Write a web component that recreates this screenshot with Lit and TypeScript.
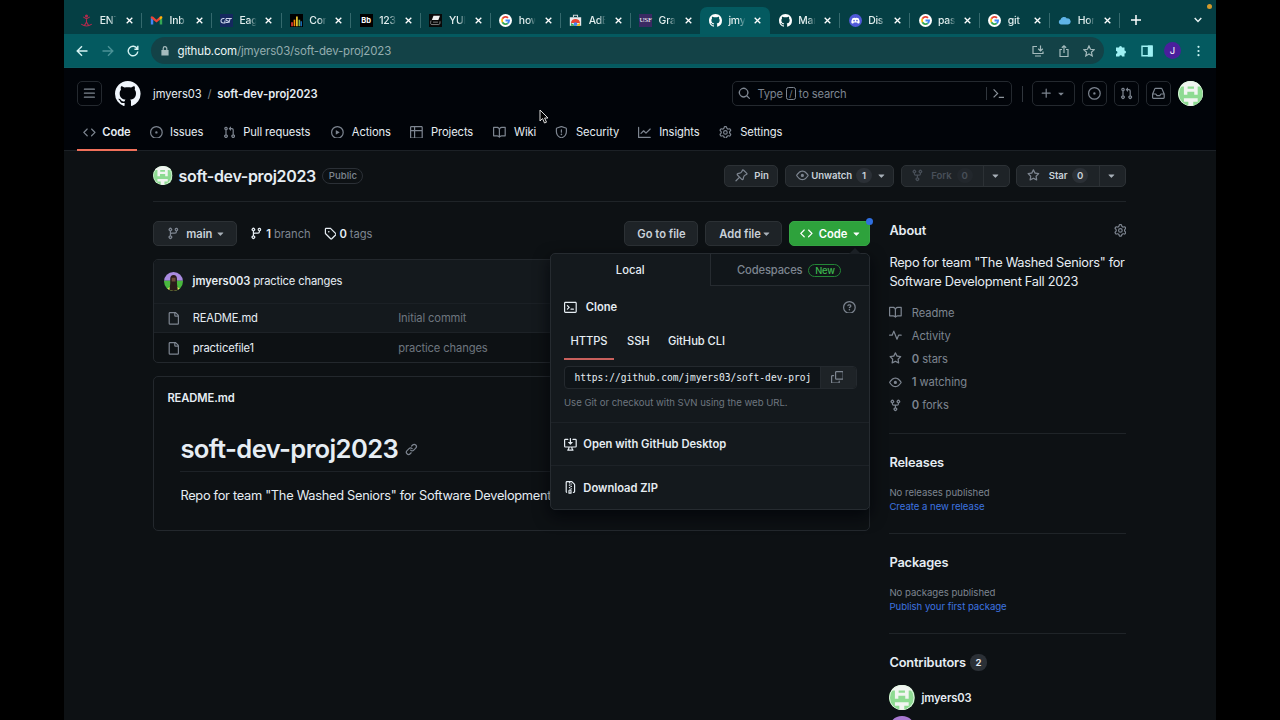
import { LitElement, html, css, svg } from "lit";
import { customElement } from "lit/decorators.js";

const P: Record<string, string> = {
  code: "m11.28 3.22 4.25 4.25a.75.75 0 0 1 0 1.06l-4.25 4.25a.749.749 0 0 1-1.275-.326.749.749 0 0 1 .215-.734L13.94 8l-3.72-3.72a.749.749 0 0 1 .326-1.275.749.749 0 0 1 .734.215Zm-6.56 0a.751.751 0 0 1 1.042.018.751.751 0 0 1 .018 1.042L2.06 8l3.72 3.72a.749.749 0 0 1-.326 1.275.749.749 0 0 1-.734-.215L.47 8.53a.75.75 0 0 1 0-1.06Z",
  issue: "M8 9.5a1.5 1.5 0 1 0 0-3 1.5 1.5 0 0 0 0 3Z M8 0a8 8 0 1 1 0 16A8 8 0 0 1 8 0ZM1.5 8a6.5 6.5 0 1 0 13 0 6.5 6.5 0 0 0-13 0Z",
  pr: "M1.5 3.25a2.25 2.25 0 1 1 3 2.122v5.256a2.251 2.251 0 1 1-1.5 0V5.372A2.25 2.25 0 0 1 1.5 3.25Zm5.677-.177L9.573.677A.25.25 0 0 1 10 .854V2.5h1A2.5 2.5 0 0 1 13.5 5v5.628a2.251 2.251 0 1 1-1.5 0V5a1 1 0 0 0-1-1h-1v1.646a.25.25 0 0 1-.427.177L7.177 3.427a.25.25 0 0 1 0-.354ZM3.75 2.5a.75.75 0 1 0 0 1.5.75.75 0 0 0 0-1.5Zm0 9.5a.75.75 0 1 0 0 1.5.75.75 0 0 0 0-1.5Zm8.25.75a.75.75 0 1 0 1.5 0 .75.75 0 0 0-1.5 0Z",
  play: "M8 0a8 8 0 1 1 0 16A8 8 0 0 1 8 0ZM1.5 8a6.5 6.5 0 1 0 13 0 6.5 6.5 0 0 0-13 0Zm4.879-2.773 4.264 2.559a.25.25 0 0 1 0 .428l-4.264 2.559A.25.25 0 0 1 6 10.559V5.442a.25.25 0 0 1 .379-.215Z",
  table: "M0 1.75C0 .784.784 0 1.75 0h12.5C15.216 0 16 .784 16 1.75v12.5A1.75 1.75 0 0 1 14.25 16H1.75A1.75 1.75 0 0 1 0 14.25ZM6.5 6.5v8h7.75a.25.25 0 0 0 .25-.25V6.5Zm8-1.5V1.75a.25.25 0 0 0-.25-.25H6.5V5Zm-13 1.5v7.75c0 .138.112.25.25.25H5v-8ZM5 5V1.5H1.75a.25.25 0 0 0-.25.25V5Z",
  book: "M0 1.75A.75.75 0 0 1 .75 1h4.253c1.227 0 2.317.59 3 1.501A3.743 3.743 0 0 1 11.006 1h4.245a.75.75 0 0 1 .75.75v10.5a.75.75 0 0 1-.75.75h-4.507a2.25 2.25 0 0 0-1.591.659l-.622.621a.75.75 0 0 1-1.06 0l-.622-.621A2.25 2.25 0 0 0 5.258 13H.75a.75.75 0 0 1-.75-.75Zm7.251 10.324.004-5.073-.002-2.253A2.25 2.25 0 0 0 5.003 2.5H1.5v9h3.757a3.75 3.75 0 0 1 1.994.574ZM8.755 4.75l-.004 7.322a3.752 3.752 0 0 1 1.992-.572H14.5v-9h-3.495a2.25 2.25 0 0 0-2.25 2.25Z",
  shield: "M7.467.133a1.748 1.748 0 0 1 1.066 0l5.25 1.68A1.75 1.75 0 0 1 15 3.48V7c0 1.566-.32 3.182-1.303 4.682-.983 1.498-2.585 2.813-5.032 3.855a1.697 1.697 0 0 1-1.33 0c-2.447-1.042-4.049-2.357-5.032-3.855C1.32 10.182 1 8.566 1 7V3.48a1.755 1.755 0 0 1 1.217-1.667Zm.61 1.429a.25.25 0 0 0-.153 0l-5.25 1.68a.25.25 0 0 0-.174.238V7c0 1.358.275 2.666 1.057 3.86.784 1.194 2.121 2.34 4.366 3.297a.196.196 0 0 0 .154 0c2.245-.956 3.582-2.104 4.366-3.298C13.225 9.666 13.5 8.36 13.5 7V3.48a.251.251 0 0 0-.174-.237l-5.25-1.68ZM8.75 4.75v3a.75.75 0 0 1-1.5 0v-3a.75.75 0 0 1 1.5 0ZM9 10.5a1 1 0 1 1-2 0 1 1 0 0 1 2 0Z",
  graph: "M1.5 1.75V13.5h13.75a.75.75 0 0 1 0 1.5H.75a.75.75 0 0 1-.75-.75V1.75a.75.75 0 0 1 1.5 0Zm14.28 2.53-5.25 5.25a.75.75 0 0 1-1.06 0L7 7.06 4.28 9.78a.751.751 0 0 1-1.042-.018.751.751 0 0 1-.018-1.042l3.25-3.25a.75.75 0 0 1 1.06 0L10 7.94l4.72-4.72a.751.751 0 0 1 1.042.018.751.751 0 0 1 .018 1.042Z",
  gear: "M8 0a8.2 8.2 0 0 1 .701.031C9.444.095 9.99.645 10.16 1.29l.288 1.107c.018.066.079.158.212.224.231.114.454.243.668.386.123.082.233.09.299.071l1.103-.303c.644-.176 1.392.021 1.82.63.27.385.506.792.704 1.218.315.675.111 1.422-.364 1.891l-.814.806c-.049.048-.098.147-.088.294.016.257.016.515 0 .772-.01.147.038.246.088.294l.814.806c.475.469.679 1.216.364 1.891a7.977 7.977 0 0 1-.704 1.217c-.428.61-1.176.807-1.82.63l-1.102-.302c-.067-.019-.177-.011-.3.071a5.909 5.909 0 0 1-.668.386c-.133.066-.194.158-.211.224l-.29 1.106c-.168.646-.715 1.196-1.458 1.26a8.006 8.006 0 0 1-1.402 0c-.743-.064-1.289-.614-1.458-1.26l-.289-1.106c-.018-.066-.079-.158-.212-.224a5.738 5.738 0 0 1-.668-.386c-.123-.082-.233-.09-.299-.071l-1.103.303c-.644.176-1.392-.021-1.82-.63a8.12 8.12 0 0 1-.704-1.218c-.315-.675-.111-1.422.363-1.891l.815-.806c.05-.048.098-.147.088-.294a6.214 6.214 0 0 1 0-.772c.01-.147-.038-.246-.088-.294l-.815-.806C.635 6.045.431 5.298.746 4.623a7.92 7.92 0 0 1 .704-1.217c.428-.61 1.176-.807 1.82-.63l1.102.302c.067.019.177.011.3-.071.214-.143.437-.272.668-.386.133-.066.194-.158.211-.224l.29-1.106C6.009.645 6.556.095 7.299.03 7.53.01 7.764 0 8 0Zm-.571 1.525c-.036.003-.108.036-.137.146l-.289 1.105c-.147.561-.549.967-.998 1.189-.173.086-.34.183-.5.29-.417.278-.97.423-1.529.27l-1.103-.303c-.109-.03-.175.016-.195.045-.22.312-.412.644-.573.99-.014.031-.021.11.059.19l.815.806c.411.406.562.957.53 1.456a4.709 4.709 0 0 0 0 .582c.032.499-.119 1.05-.53 1.456l-.815.806c-.081.08-.073.159-.059.19.162.346.353.677.573.989.02.03.085.076.195.046l1.102-.303c.56-.153 1.113-.008 1.53.27.161.107.328.204.501.29.447.222.85.629.997 1.189l.289 1.105c.029.109.101.143.137.146a6.6 6.6 0 0 0 1.142 0c.036-.003.108-.036.137-.146l.289-1.105c.147-.561.549-.967.998-1.189.173-.086.34-.183.5-.29.417-.278.97-.423 1.529-.27l1.103.303c.109.029.175-.016.195-.045.22-.313.411-.644.573-.99.014-.031.021-.11-.059-.19l-.815-.806c-.411-.406-.562-.957-.53-1.456a4.709 4.709 0 0 0 0-.582c-.032-.499.119-1.05.53-1.456l.815-.806c.081-.08.073-.159.059-.19a6.464 6.464 0 0 0-.573-.989c-.02-.03-.085-.076-.195-.046l-1.102.303c-.56.153-1.113.008-1.53-.27a4.44 4.44 0 0 0-.501-.29c-.447-.222-.85-.629-.997-1.189l-.289-1.105c-.029-.11-.101-.143-.137-.146a6.6 6.6 0 0 0-1.142 0ZM11 8a3 3 0 1 1-6 0 3 3 0 0 1 6 0ZM9.5 8a1.5 1.5 0 1 0-3.001.001A1.5 1.5 0 0 0 9.5 8Z",
  mark: "M8 0c4.42 0 8 3.58 8 8a8.013 8.013 0 0 1-5.45 7.59c-.4.08-.55-.17-.55-.38 0-.27.01-1.13.01-2.2 0-.75-.25-1.23-.54-1.48 1.78-.2 3.65-.88 3.65-3.95 0-.88-.31-1.59-.82-2.15.08-.2.36-1.02-.08-2.12 0 0-.67-.22-2.2.82-.64-.18-1.32-.27-2-.27-.68 0-1.36.09-2 .27-1.53-1.03-2.2-.82-2.2-.82-.44 1.1-.16 1.92-.08 2.12-.51.56-.82 1.28-.82 2.15 0 3.06 1.86 3.75 3.64 3.95-.23.2-.44.55-.51 1.07-.46.21-1.61.55-2.33-.66-.15-.24-.6-.83-1.23-.82-.67.01-.27.38.01.53.34.19.73.9.82 1.13.16.45.68 1.31 2.69.94 0 .67.01 1.3.01 1.49 0 .21-.15.45-.55.38A7.995 7.995 0 0 1 0 8c0-4.42 3.58-8 8-8Z",
  search: "M10.68 11.74a6 6 0 0 1-7.922-8.982 6 6 0 0 1 8.982 7.922l3.04 3.04a.749.749 0 0 1-.326 1.275.749.749 0 0 1-.734-.215ZM11.5 7a4.499 4.499 0 1 0-8.997 0A4.499 4.499 0 0 0 11.5 7Z",
  bars: "M1 2.75A.75.75 0 0 1 1.75 2h12.5a.75.75 0 0 1 0 1.5H1.75A.75.75 0 0 1 1 2.75Zm0 5A.75.75 0 0 1 1.75 7h12.5a.75.75 0 0 1 0 1.5H1.75A.75.75 0 0 1 1 7.75ZM1.75 12h12.5a.75.75 0 0 1 0 1.5H1.75a.75.75 0 0 1 0-1.5Z",
  plus: "M7.75 2a.75.75 0 0 1 .75.75V7h4.25a.75.75 0 0 1 0 1.5H8.5v4.25a.75.75 0 0 1-1.5 0V8.5H2.75a.75.75 0 0 1 0-1.5H7V2.75A.75.75 0 0 1 7.75 2Z",
  down: "m4.427 7.427 3.396 3.396a.25.25 0 0 0 .354 0l3.396-3.396A.25.25 0 0 0 11.396 7H4.604a.25.25 0 0 0-.177.427Z",
  inbox: "M2.8 2.06A1.75 1.75 0 0 1 4.41 1h7.18c.7 0 1.333.417 1.61 1.06l2.74 6.395c.04.093.06.194.06.295v4.5A1.75 1.75 0 0 1 14.25 15H1.75A1.75 1.75 0 0 1 0 13.25v-4.5c0-.101.02-.202.06-.295Zm1.61.44a.25.25 0 0 0-.23.152L1.887 8H4.75a.75.75 0 0 1 .6.3L6.625 10h2.75l1.275-1.7a.75.75 0 0 1 .6-.3h2.863L11.82 2.652a.25.25 0 0 0-.23-.152Zm10.09 7h-2.875l-1.275 1.7a.75.75 0 0 1-.6.3h-3.5a.75.75 0 0 1-.6-.3L4.375 9.5H1.5v3.75c0 .138.112.25.25.25h12.5a.25.25 0 0 0 .25-.25Z",
  pin: "m11.294.984 3.722 3.722a1.75 1.75 0 0 1-.504 2.826l-1.327.613a3.089 3.089 0 0 0-1.707 2.084l-.584 2.454c-.317 1.332-1.972 1.8-2.94.832L5.75 11.311 1.78 15.28a.749.749 0 1 1-1.06-1.06l3.969-3.97-2.204-2.204c-.968-.968-.5-2.623.832-2.94l2.454-.584a3.08 3.08 0 0 0 2.084-1.707l.613-1.327a1.75 1.75 0 0 1 2.826-.504ZM6.283 9.723l2.732 2.731a.25.25 0 0 0 .42-.119l.584-2.454a4.586 4.586 0 0 1 2.537-3.098l1.328-.613a.25.25 0 0 0 .072-.404l-3.722-3.722a.25.25 0 0 0-.404.072l-.613 1.328a4.584 4.584 0 0 1-3.098 2.537l-2.454.584a.25.25 0 0 0-.119.42l2.731 2.732Z",
  eye: "M8 2c1.981 0 3.671.992 4.933 2.078 1.27 1.091 2.187 2.345 2.637 3.023a1.62 1.62 0 0 1 0 1.798c-.45.678-1.367 1.932-2.637 3.023C11.67 13.008 9.981 14 8 14c-1.981 0-3.671-.992-4.933-2.078C1.797 10.83.88 9.576.43 8.898a1.62 1.62 0 0 1 0-1.798c.45-.677 1.367-1.931 2.637-3.022C4.33 2.992 6.019 2 8 2ZM1.679 7.932a.12.12 0 0 0 0 .136c.411.622 1.241 1.75 2.366 2.717C5.176 11.758 6.527 12.5 8 12.5c1.473 0 2.825-.742 3.955-1.715 1.124-.967 1.954-2.096 2.366-2.717a.12.12 0 0 0 0-.136c-.412-.621-1.242-1.75-2.366-2.717C10.824 4.242 9.473 3.5 8 3.5c-1.473 0-2.825.742-3.955 1.715-1.124.967-1.954 2.096-2.366 2.717ZM8 10a2 2 0 1 1-.001-3.999A2 2 0 0 1 8 10Z",
  fork: "M5 5.372v.878c0 .414.336.75.75.75h4.5a.75.75 0 0 0 .75-.75v-.878a2.25 2.25 0 1 1 1.5 0v.878a2.25 2.25 0 0 1-2.25 2.25h-1.5v2.128a2.251 2.251 0 1 1-1.5 0V8.5h-1.5A2.25 2.25 0 0 1 3.5 6.25v-.878a2.25 2.25 0 1 1 1.5 0ZM5 3.25a.75.75 0 1 0-1.5 0 .75.75 0 0 0 1.5 0Zm6.75.75a.75.75 0 1 0 0-1.5.75.75 0 0 0 0 1.5Zm-3 8.75a.75.75 0 1 0-1.5 0 .75.75 0 0 0 1.5 0Z",
  star: "M8 .25a.75.75 0 0 1 .673.418l1.882 3.815 4.21.612a.75.75 0 0 1 .416 1.279l-3.046 2.97.719 4.192a.751.751 0 0 1-1.088.791L8 12.347l-3.766 1.98a.75.75 0 0 1-1.088-.79l.72-4.194L.818 6.374a.75.75 0 0 1 .416-1.28l4.21-.611L7.327.668A.75.75 0 0 1 8 .25Zm0 2.445L6.615 5.5a.75.75 0 0 1-.564.41l-3.097.45 2.24 2.184a.75.75 0 0 1 .216.664l-.528 3.084 2.769-1.456a.75.75 0 0 1 .698 0l2.77 1.456-.53-3.084a.75.75 0 0 1 .216-.664l2.24-2.183-3.096-.45a.75.75 0 0 1-.564-.41L8 2.694Z",
  branch: "M9.5 3.25a2.25 2.25 0 1 1 3 2.122V6A2.5 2.5 0 0 1 10 8.5H6a1 1 0 0 0-1 1v1.128a2.251 2.251 0 1 1-1.5 0V5.372a2.25 2.25 0 1 1 1.5 0v1.836A2.493 2.493 0 0 1 6 7h4a1 1 0 0 0 1-1v-.628A2.25 2.25 0 0 1 9.5 3.25Zm-6 0a.75.75 0 1 0 1.5 0 .75.75 0 0 0-1.5 0Zm8.25-.75a.75.75 0 1 0 0 1.5.75.75 0 0 0 0-1.5ZM4.25 12a.75.75 0 1 0 0 1.5.75.75 0 0 0 0-1.5Z",
  tag: "M1 7.775V2.75C1 1.784 1.784 1 2.75 1h5.025c.464 0 .91.184 1.238.513l6.25 6.25a1.75 1.75 0 0 1 0 2.474l-5.026 5.026a1.75 1.75 0 0 1-2.474 0l-6.25-6.25A1.752 1.752 0 0 1 1 7.775Zm1.5 0c0 .066.026.13.073.177l6.25 6.25a.25.25 0 0 0 .354 0l5.025-5.025a.25.25 0 0 0 0-.354l-6.25-6.25a.25.25 0 0 0-.177-.073H2.75a.25.25 0 0 0-.25.25ZM6 5a1 1 0 1 1 0 2 1 1 0 0 1 0-2Z",
  file: "M2 1.75C2 .784 2.784 0 3.75 0h6.586c.464 0 .909.184 1.237.513l2.914 2.914c.329.328.513.773.513 1.237v9.586A1.75 1.75 0 0 1 13.25 16h-9.5A1.75 1.75 0 0 1 2 14.25Zm1.75-.25a.25.25 0 0 0-.25.25v12.5c0 .138.112.25.25.25h9.5a.25.25 0 0 0 .25-.25V6h-2.75A1.75 1.75 0 0 1 9 4.25V1.5Zm6.75.062V4.25c0 .138.112.25.25.25h2.688l-.011-.013-2.914-2.914-.013-.011Z",
  link: "m7.775 3.275 1.25-1.25a3.5 3.5 0 1 1 4.95 4.95l-2.5 2.5a3.5 3.5 0 0 1-4.95 0 .751.751 0 0 1 .018-1.042.751.751 0 0 1 1.042-.018 1.998 1.998 0 0 0 2.83 0l2.5-2.5a2.002 2.002 0 0 0-2.83-2.83l-1.25 1.25a.751.751 0 0 1-1.042-.018.751.751 0 0 1-.018-1.042Zm-4.69 9.64a1.998 1.998 0 0 0 2.83 0l1.25-1.25a.751.751 0 0 1 1.042.018.751.751 0 0 1 .018 1.042l-1.25 1.25a3.5 3.5 0 1 1-4.95-4.95l2.5-2.5a3.5 3.5 0 0 1 4.95 0 .751.751 0 0 1-.018 1.042.751.751 0 0 1-1.042.018 1.998 1.998 0 0 0-2.83 0l-2.5 2.5a1.998 1.998 0 0 0 0 2.83Z",
  terminal: "M0 2.75C0 1.784.784 1 1.75 1h12.5c.966 0 1.75.784 1.75 1.75v10.5A1.75 1.75 0 0 1 14.25 15H1.75A1.75 1.75 0 0 1 0 13.25Zm1.75-.25a.25.25 0 0 0-.25.25v10.5c0 .138.112.25.25.25h12.5a.25.25 0 0 0 .25-.25V2.75a.25.25 0 0 0-.25-.25ZM7.25 8a.749.749 0 0 1-.22.53l-2.25 2.25a.749.749 0 0 1-1.275-.326.749.749 0 0 1 .215-.734L5.44 8 3.72 6.28a.749.749 0 0 1 .326-1.275.749.749 0 0 1 .734.215l2.25 2.25c.141.14.22.331.22.53Zm1.5 1.5h3a.75.75 0 0 1 0 1.5h-3a.75.75 0 0 1 0-1.5Z",
  question: "M0 8a8 8 0 1 1 16 0A8 8 0 0 1 0 8Zm8-6.5a6.5 6.5 0 1 0 0 13 6.5 6.5 0 0 0 0-13ZM6.92 6.085h.001a.749.749 0 1 1-1.342-.67c.169-.339.436-.701.849-.977C6.845 4.16 7.369 4 8 4a2.756 2.756 0 0 1 1.637.525c.503.377.863.965.863 1.725 0 .448-.115.83-.329 1.15-.205.307-.47.513-.692.662-.109.072-.22.138-.313.195l-.006.004a6.24 6.24 0 0 0-.26.16.952.952 0 0 0-.276.245.75.75 0 0 1-1.248-.832c.184-.264.42-.489.692-.661.103-.067.207-.132.313-.195l.007-.004c.1-.061.182-.11.258-.161a.969.969 0 0 0 .277-.245C8.96 6.514 9 6.427 9 6.25a.612.612 0 0 0-.262-.525A1.27 1.27 0 0 0 8 5.5c-.369 0-.595.09-.74.187a1.01 1.01 0 0 0-.34.398ZM9 11a1 1 0 1 1-2 0 1 1 0 0 1 2 0Z",
  copy: "M0 6.75C0 5.784.784 5 1.75 5h1.5a.75.75 0 0 1 0 1.5h-1.5a.25.25 0 0 0-.25.25v7.5c0 .138.112.25.25.25h7.5a.25.25 0 0 0 .25-.25v-1.5a.75.75 0 0 1 1.5 0v1.5A1.75 1.75 0 0 1 9.25 16h-7.5A1.75 1.75 0 0 1 0 14.25Z M5 1.75C5 .784 5.784 0 6.75 0h7.5C15.216 0 16 .784 16 1.75v7.5A1.75 1.75 0 0 1 14.25 11h-7.5A1.75 1.75 0 0 1 5 9.25Zm1.75-.25a.25.25 0 0 0-.25.25v7.5c0 .138.112.25.25.25h7.5a.25.25 0 0 0 .25-.25v-7.5a.25.25 0 0 0-.25-.25Z",
  desktop: "m4.927 5.427 2.896 2.896a.25.25 0 0 0 .354 0l2.896-2.896A.25.25 0 0 0 10.896 5H8.75V.75a.75.75 0 1 0-1.5 0V5H5.104a.25.25 0 0 0-.177.427Z M1.573 2.573a.25.25 0 0 0-.073.177v7.5a.25.25 0 0 0 .25.25h12.5a.25.25 0 0 0 .25-.25v-7.5a.25.25 0 0 0-.25-.25h-3a.75.75 0 1 1 0-1.5h3A1.75 1.75 0 0 1 16 2.75v7.5A1.75 1.75 0 0 1 14.25 12h-3.727c.099 1.041.52 1.872 1.292 2.757A.752.752 0 0 1 11.25 16h-6.5a.75.75 0 0 1-.565-1.243c.772-.885 1.192-1.716 1.292-2.757H1.75A1.75 1.75 0 0 1 0 10.25v-7.5A1.75 1.75 0 0 1 1.75 1h3a.75.75 0 0 1 0 1.5h-3a.25.25 0 0 0-.177.073ZM6.982 12a5.72 5.72 0 0 1-.765 2.5h3.566a5.72 5.72 0 0 1-.765-2.5H6.982Z",
  zip: "M3.5 1.75v11.5c0 .09.048.173.126.217a.75.75 0 0 1-.752 1.298A1.748 1.748 0 0 1 2 13.25V1.75C2 .784 2.784 0 3.75 0h5.586c.464 0 .909.185 1.237.513l2.914 2.914c.329.328.513.773.513 1.237v8.586A1.75 1.75 0 0 1 12.25 15h-.5a.75.75 0 0 1 0-1.5h.5a.25.25 0 0 0 .25-.25V4.664a.25.25 0 0 0-.073-.177L9.513 1.573a.25.25 0 0 0-.177-.073H7.25a.75.75 0 0 1 0 1.5h-.5a.75.75 0 0 1 0-1.5h-3a.25.25 0 0 0-.25.25Zm3.75 8.75h.5c.966 0 1.75.784 1.75 1.75v3a.75.75 0 0 1-.75.75h-2.5a.75.75 0 0 1-.75-.75v-3c0-.966.784-1.75 1.75-1.75ZM6 5.25a.75.75 0 0 1 .75-.75h.5a.75.75 0 0 1 0 1.5h-.5A.75.75 0 0 1 6 5.25Zm.75 2.25h.5a.75.75 0 0 1 0 1.5h-.5a.75.75 0 0 1 0-1.5Zm1.25-.75A.75.75 0 0 1 8.75 6h.5a.75.75 0 0 1 0 1.5h-.5A.75.75 0 0 1 8 6.75ZM8.75 3h.5a.75.75 0 0 1 0 1.5h-.5a.75.75 0 0 1 0-1.5ZM8 9.75A.75.75 0 0 1 8.75 9h.5a.75.75 0 0 1 0 1.5h-.5A.75.75 0 0 1 8 9.75Zm-1 2.5v2.250h1v-2.250a.25.25 0 0 0-.25-.25h-.5a.25.25 0 0 0-.25.25Z",
  pulse: "M6 2c.306 0 .582.187.696.471L10 10.731l1.304-3.26A.751.751 0 0 1 12 7h3.25a.75.75 0 0 1 0 1.5h-2.742l-1.812 4.528a.751.751 0 0 1-1.392 0L6 4.77 4.696 8.03A.75.75 0 0 1 4 8.5H.75a.75.75 0 0 1 0-1.5h2.742l1.812-4.529A.751.751 0 0 1 6 2Z",
};

const ic = (name: string, cls = "") =>
  html`<svg class="ic ${cls}" viewBox="0 0 16 16"><path fill="currentColor" d=${P[name]}></path></svg>`;

const identicon = (cls: string) => html`<svg class="${cls} round" viewBox="0 0 26 26">
  <path fill="#8edb92" d="M0 0h26v26H0Z"></path>
  <path fill="#f1f5f1" d="M0 0h26v5.500h-6v8.500h-3.500v-3h-7v3H6V5.500H0ZM9.800 5.500v2.300h6.400V5.500ZM6 17.500h14v3.500h-4.500v5h-5v-5H6ZM0 21h3.500v5H0ZM22.500 21H26v5h-3.500Z" fill-rule="evenodd"></path>
  <circle cx="13" cy="13" r="12.500" fill="none" stroke="#e6f3e6" stroke-width="1"></circle></svg>`;

const favs: Record<string, unknown> = {
  ent: svg`<g stroke="#b02a4c" stroke-width="1.3" fill="none"><path d="M8 5v6M4 3.500 8 6l4-2.500M8 10l-2.500 4M8 10l2.500 4M1.500 12.500q6.500 4.500 13 0"></path></g><circle cx="8" cy="2.500" r="1.900" fill="#b02a4c"></circle>`,
  gmail: svg`<path fill="#4285f4" d="M1 4v9h3V7Z"></path><path fill="#34a853" d="M15 4v9h-3V7Z"></path><path fill="#ea4335" d="M1 5V3.500Q2 2 4 3.500L8 7l4-3.500Q14 2 15 3.500V5l-7 5.500Z"></path><path fill="#fbbc04" d="M12 3.500Q14 2 15 3.500V5l-3 2.500Z"></path>`,
  eag: svg`<path fill="#14285e" d="M0 0h16v16H0Z"></path><path d="M5.500 5.500H4a2.500 2.500 0 0 0 0 5.500h2V8M7 10.500h2.500q1.500-1.300 0-2.300H8q-1.500-1.500 0-2.700h6.500M12.500 5.500 11 11" stroke="#c9d2ea" stroke-width="1.300" fill="none"></path>`,
  bars: svg`<path fill="#000" d="M0 0h16v16H0Z"></path><path fill="#e53935" d="M1.500 10h2v5h-2Z"></path><path fill="#fb8c00" d="M4.500 7h2v8h-2Z"></path><path fill="#fdd835" d="M7.500 3h2v12h-2Z"></path><path fill="#7cb342" d="M10.500 7h2v8h-2Z"></path><path fill="#1e88e5" d="M13 9h1.500v6H13Z"></path>`,
  yui: svg`<path fill="#080808" d="M0 0h16v16H0Z"></path><path d="M5.500 2h8l-2 5.500h-8Z" fill="#eee"></path><path d="M2.500 8q-1.500 5 1 5h8.500q2 0 1.500-4M5 10h6" stroke="#999" fill="none"></path>`,
  google: svg`<circle cx="8" cy="8" r="8" fill="#fff"></circle><g fill="none" stroke-width="2.200"><path stroke="#ea4335" d="M4.200 5.800A4.400 4.400 0 0 1 11.100 4.900"></path><path stroke="#fbbc04" d="M4.200 5.800A4.400 4.400 0 0 0 4.200 10.200"></path><path stroke="#34a853" d="M4.200 10.200A4.400 4.400 0 0 0 10.800 11.400"></path><path stroke="#4285f4" d="M10.800 11.400A4.400 4.400 0 0 0 12.400 8H8"></path></g>`,
  store: svg`<path fill="#e8eaed" d="M1 4h14v10.500H1Z"></path><path d="M5.500 4V1.500h5V4" fill="none" stroke="#cfd3d8" stroke-width="1.300"></path><path fill="#ea4335" d="M2.500 11a5.500 5 0 0 1 11 0Z"></path><path fill="#fbbc04" d="M8 14.500l5.500-3.500v3.500Z"></path><path fill="#34a853" d="M2.500 11v3.500H8Z"></path><circle cx="8" cy="12.500" r="2.200" fill="#4285f4"></circle>`,
  github: svg`<path fill="#fff" d=${P.mark}></path>`,
  discord: svg`<circle cx="8" cy="8" r="8" fill="#5059d8"></circle><path fill="#fff" d="M4 5.500Q6 4.200 8 4.800 10 4.200 12 5.500q1.500 3 1 5.500-1.500 1-2.500.5l-.5-1H6l-.5 1q-1 .5-2.500-.5-.5-2.500 1-5.500Z"></path><circle cx="6.200" cy="8.200" r="1" fill="#5059d8"></circle><circle cx="9.800" cy="8.200" r="1" fill="#5059d8"></circle>`,
  cloud: svg`<path fill="#5fb3e6" d="M3.500 13A3 3 0 0 1 3 7.200 4.500 4.500 0 0 1 11 5.500a3.800 3.800 0 0 1 1.500 7.500Z"></path>`,
};

const tabs: [string, string][] = [
  ["ent", "ENT"], ["gmail", "Inb"], ["eag", "Eag"], ["bars", "Cor"], ["bb", "123"],
  ["yui", "YUI"], ["google", "how"], ["store", "AdB"], ["usf", "Gra"], ["github", "jmy"],
  ["github", "Mar"], ["discord", "Dis"], ["google", "pas"], ["google", "git"], ["cloud", "Hor"],
];

const nav: [string, string, string][] = [
  ["code", "Code", "n0"], ["issue", "Issues", "n1"], ["pr", "Pull requests", ""], ["play", "Actions", ""],
  ["table", "Projects", ""], ["book", "Wiki", ""], ["shield", "Security", ""], ["graph", "Insights", ""],
  ["gear", "Settings", ""],
];

@customElement("app-root")
export class AppRoot extends LitElement {
  static styles = css`
    :host { display: block; width: 1280px; height: 720px; overflow: hidden; background: #000;
      font-family: Inter, "Liberation Sans", sans-serif; font-size: 11.2px; color: #e6edf3; }
    * { box-sizing: border-box; }
    svg { display: block; flex: none; }
    .ic { width: 12.8px; height: 12.8px; color: #7d8590; }
    .round { border-radius: 50%; overflow: hidden; }
    .win { position: relative; width: 1152px; height: 720px; margin: 0 auto; background: #0d1114; overflow: hidden; }
    .row { display: flex; align-items: center; white-space: nowrap; }
    b { font-weight: 600; }

    .strip { height: 34px; padding: 7px 0 0 7px; background: #053f44; display: flex; }
    .tab { width: 69.86px; height: 27px; display: grid; grid-template-columns: 13px 17.500px 1fr; column-gap: 6.500px;
      align-items: center; padding-left: 9.200px; position: relative; color: #e2eeee; font-size: 10.400px; font-weight: 500; }
    .tab.sep::after { content: ""; position: absolute; right: -1px; top: 6px; height: 15px; width: 1px; background: #34696d; }
    .tab.on { background: #045a60; border-radius: 7px 7px 0 0; }
    .tt { overflow: hidden; white-space: nowrap; padding: 2px 0; letter-spacing: -0.200px; -webkit-mask-image: linear-gradient(90deg, #000 55%, transparent 98%); mask-image: linear-gradient(90deg, #000 55%, transparent 98%); }
    .fav { width: 13px; height: 13px; }
    .txtfav { width: 13px; height: 13px; font-size: 7.500px; font-weight: 700; line-height: 13px; text-align: center; background: #000; color: #fff; }
    .txtfav.usf { font-family: "Liberation Serif", serif; background: #3a2a63; font-size: 7px; font-weight: 400; letter-spacing: -0.300px; }
    .x { width: 7px; height: 7px; margin-left: 2px; }
    .newtab { width: 10px; height: 10px; margin: 8px 0 0 12px; }
    .chev { width: 8px; height: 8px; margin: 9px 0 0 53px; }
    .rec { position: absolute; left: 1142.500px; top: 3.500px; width: 5px; height: 5px; border-radius: 50%; background: #d39a2c; }

    .bar { height: 34px; background: #045a60; border-bottom: 1px solid #0d5c62; display: flex; align-items: center; }
    .bic { width: 12px; height: 12px; color: #d5f3f3; fill: none; stroke: currentColor; stroke-width: 1.400; }
    .b1 { margin-left: 12px; } .b2 { margin-left: 13.500px; color: #4b9296; } .b3 { margin-left: 13.500px; }
    .omni { width: 953px; height: 27px; margin-left: 12px; border-radius: 14px; background: #134247; display: flex; align-items: center; padding-left: 8px; }
    .omni .bic { color: #a5bbbd; stroke-width: 1.200; }
    .url { margin-left: 6.500px; width: 854px; font-size: 11.500px; color: #93adaf; letter-spacing: -0.160px; }
    .url span { color: #edf6f6; }
    .o2 { margin-left: 14px; } .o3 { margin-left: 13.500px; }
    .r1 { margin-left: 11px; color: #9ff1f4; } .r2 { margin-left: 13.500px; color: #9ff1f4; }
    .prof { width: 17px; height: 17px; border-radius: 50%; background: #4a1f9c; color: #fff; font-size: 9.500px; text-align: center; line-height: 17px; margin-left: 11.500px; }
    .r4 { margin-left: 10.500px; color: #c9f3f3; }

    .head { height: 83px; background: #010409; border-bottom: 1px solid #1c2126; }
    .h1 { height: 51px; padding-left: 12.600px; }
    .box { height: 25.600px; border: 1px solid #24292f; border-radius: 5px; display: flex; align-items: center; justify-content: center; }
    .sq { width: 25.600px; }
    .logo { width: 25.600px; height: 25.600px; color: #f0f6fc; margin-left: 12.800px; }
    .crumb { margin-left: 12.500px; width: 579px; display: flex; gap: 5.800px; }
    .crumb span { letter-spacing: -0.050px; } .crumb b { letter-spacing: 0.030px; }
    .crumb i { color: #7d8590; font-style: normal; }
    .search { width: 279.500px; justify-content: flex-start; padding-left: 5px; color: #7d8590; letter-spacing: -0.180px; }
    .search .q { margin-right: 6.500px; }
    .key { border: 1px solid #7d8590; border-radius: 2.500px; width: 10px; height: 13px; line-height: 11px; text-align: center; margin: 0 3px; font-size: 9px; }
    .vr { width: 1px; height: 13px; background: #30363d; }
    .h1 > .vr { margin: 0 9.500px 0 10px; height: 16px; }
    .search .vr { margin-left: auto; }
    .cmd { width: 12.800px; height: 12.800px; margin: 0 5.500px; fill: none; stroke: #8d949c; stroke-width: 1.500; }
    .plusb { width: 43px; gap: 3px; margin-right: 6.500px; } .plusb .ic + .ic { width: 12px; }
    .mr { margin-right: 6.400px; }
    .av26 { width: 25.600px; height: 25.600px; }
    .nav { height: 32px; display: grid; padding-left: 13px; align-items: start; letter-spacing: -0.100px;
      grid-template-columns: 67px 72.500px 108.500px 79.200px 83px 62px 83.200px 81px 80px; }
    .nav .it { height: 32px; padding: 0 0 6px 6px; display: flex; align-items: center; gap: 8px; }
    .nav .n0 { width: 60px; border-bottom: 2px solid #f0705a; padding-bottom: 4px; font-weight: 600; gap: 6.500px; } .nav .n1 { gap: 7.200px; }

    .page { width: 973px; margin-left: 89.400px; }
    .rh { height: 50.500px; border-bottom: 1px solid #1f2428; }
    .av19 { width: 19.200px; height: 19.200px; }
    .title { font-size: 16px; font-weight: 600; margin-left: 6px; width: 144px; letter-spacing: -0.330px; }
    .pub { border: 1px solid #2b3036; border-radius: 9px; height: 16px; width: 41px; text-align: center; font-size: 9.600px; color: #7d8590; line-height: 14px; font-weight: 500; margin-right: 361px; }
    .btn { height: 22.400px; background: #1e2327; border: 1px solid #2c3135; border-radius: 5px; display: flex; align-items: center; font-size: 9.600px; font-weight: 600; color: #c9d1d9; white-space: nowrap; flex: none; }
    .cnt { min-width: 16px; height: 15px; border-radius: 8px; background: #2b3036; text-align: center; line-height: 15px; }
    .pin { width: 54px; padding-left: 9.500px; gap: 6.500px; margin-right: 7px; }
    .watch { width: 109px; padding-left: 9.500px; gap: 2.500px; margin-right: 6.500px; } .watch span { letter-spacing: -0.060px; } .watch .cnt { margin-left: 1.500px; }
    .forkb { width: 109px; padding-left: 9.500px; margin-right: 6.500px; }
    .forkb .l, .starb .l { display: flex; align-items: center; gap: 6px; height: 100%; border-right: 1px solid #2c3135; }
    .forkb .l { width: 72.500px; color: #484f58; } .forkb .l .ic { color: #484f58; margin-right: 1px; } .forkb .cnt { background: #22272c; margin-left: -1px; }
    .starb { width: 110px; padding-left: 9.500px; } .starb .l { width: 73.500px; } .starb .l .ic { margin-right: 3px; } .starb .cnt { margin-left: -1.500px; }
    .btn .dn { margin-left: 5px; color: #a8b0b8; } .watch .dn.ic { margin-left: 0; }

    .cols { display: flex; }
    .main { width: 717px; margin-right: 19px; padding-top: 19px; flex: none; }
    .tools { height: 26px; position: relative; }
    .btn.tb { height: 25.600px; font-size: 11.200px; }
    .mainb { width: 84px; padding-left: 12.500px; gap: 6.500px; } .mainb .dn.ic { margin-left: -4.500px; }
    .bl { margin-left: 13px; gap: 3px; color: #7d8590; width: 60.300px; flex: none; letter-spacing: -0.040px; } .bl .ic, .bl b { color: #e6edf3; }
    .bl.tg { width: 300.800px; }
    .goto { width: 74px; justify-content: center; margin-right: 7px; }
    .addf { width: 77px; padding-left: 12.800px; margin-right: 7px; } .addf .dn.ic { margin-left: -1px; }
    .codeb { width: 80.500px; background: #2ea23c; border-color: #36a845; color: #fff; padding-left: 9.500px; gap: 6px; } .codeb .ic { color: #fff; } .codeb .dn.ic { margin-left: -3px; color: #fff; }
    .dot { position: absolute; right: -3px; top: -3px; width: 7px; height: 7px; border-radius: 50%; background: #2f6fe0; }

    .files { margin-top: 12.500px; border: 1px solid #23282d; border-radius: 5px; overflow: hidden; height: 104px; letter-spacing: -0.150px; }
    .fh { height: 43.500px; background: #14191d; border-bottom: 1px solid #1b2025; padding-left: 9.500px; }
    .fh span { margin-left: 9.500px; } .fh b { letter-spacing: -0.050px; }
    .fr { height: 29.800px; padding-left: 13px; } .fr.hv { background: #14191d; border-bottom: 1px solid #1d2227; padding-top: 1px; }
    .fr span { margin-left: 12.500px; width: 205.500px; } .fr em { font-style: normal; color: #6e767f; letter-spacing: -0.120px; }
    .readme { margin-top: 13px; border: 1px solid #23282d; border-radius: 5px; height: 154.500px; padding: 0 26px; }
    .rt { font-weight: 600; height: 42px; margin-left: -13px; letter-spacing: -0.080px; }
    .rh1 { height: 52.500px; border-bottom: 1px solid #1d2227; font-size: 25.600px; font-weight: 600; padding-top: 7px; gap: 7px; }
    .rh1 span { letter-spacing: -0.640px; } .rh1 .ic { margin-top: 3px; }
    .rp { font-size: 12.800px; height: 48px; letter-spacing: -0.280px; }

    .side { width: 237px; padding-top: 18px; }
    .st { font-size: 12.800px; font-weight: 600; height: 22px; letter-spacing: -0.150px; }
    .st .ic { margin-left: auto; }
    .desc { font-size: 12.800px; line-height: 19.200px; margin: 11.500px 0 9.500px; white-space: nowrap; letter-spacing: -0.280px; }
    .li { height: 23.200px; color: #7d8590; gap: 9.600px; letter-spacing: -0.080px; } .li b { margin-right: -6.500px; }
    .sec { height: 100px; border-top: 1px solid #1f2428; padding-top: 18px; } .sec.f { margin-top: 16px; }
    .sec p { margin: 0; font-size: 9.600px; line-height: 14.600px; color: #7d8590; letter-spacing: -0.030px; } .sec p:nth-of-type(1) { margin-top: 12px; } .sec p.l { color: #3d74e0; }
    .sec .cnt { margin-left: 4px; font-size: 9.600px; width: 17px; height: 17px; line-height: 17px; }
    .ct { margin-top: 11px; gap: 6.500px; } .ct b { letter-spacing: -0.100px; } .c2 { width: 25.600px; height: 25.600px; margin-top: 6px; border-radius: 50%; background: #a878d0; }

    .pop { position: absolute; left: 486px; top: 253px; width: 320px; height: 256.500px; background: #14191d; border: 1px solid #262b30; border-radius: 5px; box-shadow: 0 6px 16px #010409cc; }
    .arr { position: absolute; right: 8px; top: -6px; width: 12px; height: 6px; fill: #1b2025; }
    .pt { height: 32px; align-items: flex-start; } .pt .a { width: 158.500px; text-align: center; font-weight: 500; line-height: 32.500px; }
    .pt .b { flex: 1; height: 32px; border-left: 1px solid #262b30; border-bottom: 1px solid #262b30; background: #11161a; display: flex; align-items: center; justify-content: center; gap: 6px; color: #7d8590; font-weight: 500; border-radius: 0 5px 0 0; letter-spacing: -0.150px; padding: 1px 1px 0 0; }
    .new { border: 1px solid #238636; color: #3fb950; border-radius: 8px; height: 13px; line-height: 11px; width: 33px; text-align: center; font-size: 9.300px; }
    .cl { height: 42px; padding: 0 13px; gap: 9px; font-weight: 600; } .cl .q { margin-left: auto; } .ic.w { color: #e6edf3; }
    .ptabs { height: 31.500px; padding-left: 13px; align-items: stretch; } .ptabs div { padding-top: 6px; font-weight: 500; letter-spacing: -0.050px; }
    .p1 { width: 50px; border-bottom: 2px solid #c9605c; text-align: center; } .p2 { margin-left: 13px; width: 41px; }
    .inp { margin: 6px 0 0 13px; width: 293px; height: 23px; border: 1px solid #24292e; border-radius: 4px; overflow: hidden; font: 9.600px "DejaVu Sans Mono", monospace; background: #0f1418; }
    .inp span { width: 255px; padding-left: 9.500px; flex: none; } .inp i { flex: 1; height: 23px; background: #1e2327; display: flex; align-items: center; justify-content: center; border-left: 1px solid #24292e; padding-right: 3px; }
    .hlp { font-size: 9.600px; color: #6e767f; padding-left: 13px; height: 34px; padding-bottom: 6px; border-bottom: 1px solid #1d2227; letter-spacing: -0.020px; }
    .pi { height: 43px; border-bottom: 1px solid #1d2227; padding-left: 13px; gap: 6.500px; font-weight: 600; padding-top: 1.500px; } .pi:last-of-type { border: 0; }
    .cursor { position: absolute; left: 474.500px; top: 109px; width: 10px; height: 15px; }
  `;

  render() {
    return html`<div class="win">
      <div class="strip">
        ${tabs.map(([f, t], i) => html`<div class="tab ${i === 9 ? "on" : i === 8 ? "" : "sep"}">
          ${f === "bb" ? html`<div class="txtfav">Bb</div>` : f === "usf" ? html`<div class="txtfav usf">USF</div>`
            : html`<svg class="fav" viewBox="0 0 16 16">${favs[f]}</svg>`}
          <div class="tt">${t}</div>
          <svg class="x" viewBox="0 0 7 7"><path d="M.7.7l5.600 5.600M6.300.7L.7 6.300" stroke="#fff" stroke-width="1.300"></path></svg>
        </div>`)}
        <svg class="newtab" viewBox="0 0 10 10"><path d="M5 0v10M0 5h10" stroke="#fff" stroke-width="1.500"></path></svg>
        <svg class="chev" viewBox="0 0 8 8"><path d="M.7 2l3.300 3.500L7.300 2" fill="none" stroke="#e8f4f4" stroke-width="1.400"></path></svg>
      </div>
      <div class="rec"></div>
      <div class="bar">
        <svg class="bic b1" viewBox="0 0 12 12"><path d="M11.500 6H1.500M6 1.200 1.200 6 6 10.800"></path></svg>
        <svg class="bic b2" viewBox="0 0 12 12"><path d="M.5 6h10M6 1.200 10.800 6 6 10.800"></path></svg>
        <svg class="bic b3" viewBox="0 0 12 12"><path d="M10.300 3.800A4.800 4.800 0 1 0 10.800 6.500M10.800.8v3.400H7.400"></path></svg>
        <div class="omni">
          <svg class="bic" viewBox="0 0 12 12"><path d="M3 5.500h6v4.500H3Z" fill="currentColor"></path><path d="M4.200 5V3.500a1.800 1.800 0 0 1 3.600 0V5"></path></svg>
          <div class="url"><span>github.com</span>/jmyers03/soft-dev-proj2023</div>
          <svg class="bic" viewBox="0 0 12 12"><path d="M5 1.500H1v7h10V6.500M3 11h6M8.500.5V6M6.200 3.800 8.500 6l2.300-2.200"></path></svg>
          <svg class="bic o2" viewBox="0 0 12 12"><path d="M4 4.500H2v7h8v-7H8M6 8V.8M3.800 2.800 6 .8l2.200 2"></path></svg>
          <svg class="bic o3" viewBox="0 0 12 12"><path d="m6 .9 1.500 3.400 3.700.4-2.800 2.500.8 3.700L6 9l-3.200 1.900.8-3.700L.8 4.700l3.700-.4Z"></path></svg>
        </div>
        <svg class="bic r1" viewBox="0 0 12 12"><path fill="currentColor" stroke="none" d="M4 2.500a1.500 1.500 0 0 1 3 0h2.500V5.500a1.500 1.500 0 0 1 0 3V11.500H7a1.300 1.300 0 0 0-2.600 0H1V8.800a1.300 1.300 0 0 0 0-2.800V2.500Z"></path></svg>
        <svg class="bic r2" viewBox="0 0 12 12"><path d="M1 1.200h10v9.600H1Z"></path><path d="M7.500 1.200H11v9.600H7.500Z" fill="currentColor"></path></svg>
        <div class="prof">J</div>
        <svg class="bic r4" viewBox="0 0 12 12"><g fill="currentColor" stroke="none"><circle cx="6.500" cy="1.800" r="1.100"></circle><circle cx="6.500" cy="6" r="1.100"></circle><circle cx="6.500" cy="10.200" r="1.100"></circle></g></svg>
      </div>
      <div class="head">
        <div class="row h1">
          <div class="box sq">${ic("bars")}</div>
          ${ic("mark", "logo")}
          <div class="crumb"><span>jmyers03</span><i>/</i><b>soft-dev-proj2023</b></div>
          <div class="box search">${ic("search", "q")}<span>Type</span><span class="key">/</span><span>to search</span>
            <div class="vr"></div>
            <svg class="cmd" viewBox="0 0 16 16"><path d="M2 3l5 5-5 5M8.500 13H15"></path></svg></div>
          <div class="vr"></div>
          <div class="box plusb">${ic("plus")}${ic("down")}</div>
          <div class="box sq mr">${ic("issue")}</div>
          <div class="box sq mr">${ic("pr")}</div>
          <div class="box sq mr">${ic("inbox")}</div>
          ${identicon("av26")}
        </div>
        <div class="nav">${nav.map(([i, t, c]) => html`<div class="it ${c}">${ic(i)}<span>${t}</span></div>`)}</div>
      </div>
      <div class="page">
        <div class="row rh">
          ${identicon("av19")}<div class="title">soft-dev-proj2023</div><div class="pub">Public</div>
          <div class="btn pin">${ic("pin")}<span>Pin</span></div>
          <div class="btn watch">${ic("eye")}<span>Unwatch</span><span class="cnt">1</span>${ic("down", "dn")}</div>
          <div class="btn forkb"><div class="l">${ic("fork")}<span>Fork</span><span class="cnt">0</span></div>${ic("down", "dn")}</div>
          <div class="btn starb"><div class="l">${ic("star")}<span>Star</span><span class="cnt">0</span></div>${ic("down", "dn")}</div>
        </div>
        <div class="cols">
          <div class="main">
            <div class="row tools">
              <div class="btn tb mainb">${ic("branch")}<span>main</span>${ic("down", "dn")}</div>
              <div class="row bl">${ic("branch")}<b>1</b>branch</div>
              <div class="row bl tg">${ic("tag")}<b>0</b>tags</div>
              <div class="btn tb goto">Go to file</div>
              <div class="btn tb addf"><span>Add file</span>${ic("down", "dn")}</div>
              <div class="btn tb codeb">${ic("code")}<span>Code</span>${ic("down", "dn")}</div>
              <div class="dot"></div>
            </div>
            <div class="files">
              <div class="row fh">
                <svg class="av19 round" viewBox="0 0 20 20"><path fill="#a98be0" d="M0 0h20v9H0Z"></path><path fill="#49b83e" d="M0 9h20v11H0Z"></path><path fill="#e4e860" d="M3 20q0-5 7-5t7 5Z"></path><path fill="#2a1c1a" d="M6.500 7q0-4 3.500-4t3.500 4v5l1 8h-9l1-8Z"></path><path fill="#6b4a3c" d="M8 6h4v4H8Z"></path></svg>
                <span><b>jmyers003</b> practice changes</span></div>
              <div class="row fr hv">${ic("file")}<span>README.md</span><em>Initial commit</em></div>
              <div class="row fr">${ic("file")}<span>practicefile1</span><em>practice changes</em></div>
            </div>
            <div class="readme">
              <div class="row rt">README.md</div>
              <div class="row rh1"><span>soft-dev-proj2023</span>${ic("link")}</div>
              <div class="row rp">Repo for team "The Washed Seniors" for Software Development Fall 2023</div>
            </div>
          </div>
          <div class="side">
            <div class="row st">About${ic("gear")}</div>
            <div class="desc">Repo for team "The Washed Seniors" for<br>Software Development Fall 2023</div>
            <div class="row li">${ic("book")}<span>Readme</span></div>
            <div class="row li">${ic("pulse")}<span>Activity</span></div>
            <div class="row li">${ic("star")}<b>0</b><span>stars</span></div>
            <div class="row li">${ic("eye")}<b>1</b><span>watching</span></div>
            <div class="row li">${ic("fork")}<b>0</b><span>forks</span></div>
            <div class="sec f"><div class="row st">Releases</div><p>No releases published</p><p class="l">Create a new release</p></div>
            <div class="sec"><div class="row st">Packages</div><p>No packages published</p><p class="l">Publish your first package</p></div>
            <div class="sec"><div class="row st">Contributors <span class="cnt">2</span></div>
              <div class="row ct">${identicon("av26")}<b>jmyers03</b></div><div class="c2"></div></div>
          </div>
        </div>
      </div>
      <div class="pop">
        <svg class="arr" viewBox="0 0 12 6"><path d="M0 6 6 0l6 6Z"></path></svg>
        <div class="row pt"><div class="a">Local</div><div class="b">Codespaces<span class="new">New</span></div></div>
        <div class="row cl">${ic("terminal", "w")}<span>Clone</span>${ic("question", "q")}</div>
        <div class="row ptabs"><div class="p1">HTTPS</div><div class="p2">SSH</div><div>GitHub CLI</div></div>
        <div class="row inp"><span>https://github.com/jmyers03/soft-dev-proj</span><i>${ic("copy")}</i></div>
        <div class="row hlp">Use Git or checkout with SVN using the web URL.</div>
        <div class="row pi">${ic("desktop", "w")}<span>Open with GitHub Desktop</span></div>
        <div class="row pi">${ic("zip", "w")}<span>Download ZIP</span></div>
      </div>
      <svg class="cursor" viewBox="0 0 10 15"><path d="M1 1v11l2.500-2.500L5.500 14l2-.8L5.600 9H9Z" fill="#000" stroke="#ddd" stroke-width="1"></path></svg>
    </div>`;
  }
}
